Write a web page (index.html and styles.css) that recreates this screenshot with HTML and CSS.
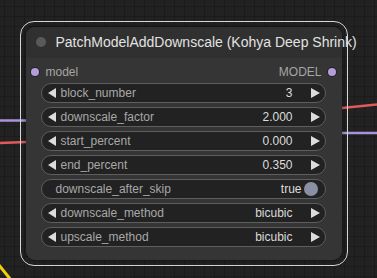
FILE: index.html
```html
<!DOCTYPE html>
<html>
<head>
<meta charset="utf-8">
<link rel="stylesheet" href="styles.css">
</head>
<body>
<div class="canvas">
  <svg class="links" width="377" height="278" viewBox="0 0 377 278">
    <line x1="0" y1="120.5" x2="26" y2="120.5" stroke="#a994dc" stroke-width="2.5"/>
    <line x1="0" y1="143" x2="26" y2="142" stroke="#e05a5a" stroke-width="2.5"/>
    <line x1="342" y1="108" x2="377" y2="104.5" stroke="#e05a5a" stroke-width="2.5"/>
    <line x1="342" y1="133" x2="377" y2="133" stroke="#a994dc" stroke-width="2.5"/>
    <line x1="-2" y1="264" x2="11" y2="280" stroke="#f2cf0a" stroke-width="3"/>
  </svg>
  <div class="outline">
    <div class="node">
      <div class="title">
        <span class="tdot"></span>
        <span class="ttext">PatchModelAddDownscale (Kohya Deep Shrink)</span>
      </div>
      <div class="body">
        <div class="io">
          <span class="slot"><span class="sdot"></span>model</span>
          <span class="slot out">MODEL<span class="sdot"></span></span>
        </div>
        <div class="widgets">
          <div class="w"><span class="al"></span><span class="lab">block_number</span><span class="val">3</span><span class="ar"></span></div>
          <div class="w"><span class="al"></span><span class="lab">downscale_factor</span><span class="val">2.000</span><span class="ar"></span></div>
          <div class="w"><span class="al"></span><span class="lab">start_percent</span><span class="val">0.000</span><span class="ar"></span></div>
          <div class="w"><span class="al"></span><span class="lab">end_percent</span><span class="val">0.350</span><span class="ar"></span></div>
          <div class="w toggle"><span class="lab">downscale_after_skip</span><span class="val">true</span><span class="knob"></span></div>
          <div class="w"><span class="al"></span><span class="lab">downscale_method</span><span class="val">bicubic</span><span class="ar"></span></div>
          <div class="w"><span class="al"></span><span class="lab">upscale_method</span><span class="val">bicubic</span><span class="ar"></span></div>
        </div>
      </div>
    </div>
  </div>
</div>
</body>
</html>
```
FILE: styles.css
```css
* { box-sizing: border-box; }
html, body { margin: 0; padding: 0; }
body {
  width: 377px;
  height: 278px;
  overflow: hidden;
  font-family: "Liberation Sans", Arial, sans-serif;
  background-color: #222222;
  background-image:
    linear-gradient(#1b1b1b 1px, transparent 1px),
    linear-gradient(90deg, #1b1b1b 1px, transparent 1px);
  background-size: 10px 10px;
  background-position: 4px 6px;
}
.canvas {
  position: relative;
  width: 377px;
  height: 278px;
  padding: 21px 0 0 20px;
}
.links {
  position: absolute;
  left: 0;
  top: 0;
}
.outline {
  position: relative;
  width: 328px;
  height: 245px;
  border: 1.5px solid #d6d6d6;
  border-radius: 14px;
  padding: 4.5px;
}
.node {
  width: 316px;
  height: 233px;
  background: #353535;
  border-radius: 9px;
  box-shadow: 0 0 4px rgba(0,0,0,0.5);
}
.title {
  height: 31px;
  display: flex;
  align-items: center;
  background: #303030;
  border-radius: 9px 9px 0 0;
  padding-left: 10px;
  white-space: nowrap;
}
.tdot {
  width: 10px;
  height: 10px;
  border-radius: 50%;
  background: #595959;
  flex: none;
}
.ttext {
  margin-left: 10px;
  font-size: 14px;
  color: #e2e2e2;
}
.body {
  padding: 7px 0 0 0;
}
.io {
  height: 14px;
  display: flex;
  justify-content: space-between;
  align-items: center;
  padding: 0 6px 0 5px;
  font-size: 12px;
  color: #a6a6a6;
}
.slot {
  display: flex;
  align-items: center;
  gap: 7px;
}
.out { gap: 6px; }
.sdot {
  width: 8px;
  height: 8px;
  border-radius: 50%;
  background: #b39ddb;
  box-shadow: 0 0 0 1px #222;
}
.widgets {
  display: flex;
  flex-direction: column;
  gap: 4px;
  padding: 4px 16px 0 15px;
}
.w {
  height: 20px;
  border: 1px solid #5e5e5e;
  border-radius: 10px;
  background: #222222;
  display: flex;
  align-items: center;
  padding: 0 5px 0 5px;
  font-size: 12px;
}
.lab {
  color: #a8a8a8;
  flex: 1;
  margin-left: 5px;
}
.val {
  color: #dcdcdc;
  margin-right: 18px;
}
.al {
  width: 0;
  height: 0;
  border-top: 5px solid transparent;
  border-bottom: 5px solid transparent;
  border-right: 8px solid #dcdcdc;
  margin-left: 1px;
}
.ar {
  width: 0;
  height: 0;
  border-top: 5px solid transparent;
  border-bottom: 5px solid transparent;
  border-left: 9px solid #dcdcdc;
}
.toggle { padding-left: 9px; padding-right: 7px; }
.toggle .lab { margin-left: 5px; }
.toggle .val { margin-right: 2px; }
.knob {
  width: 14px;
  height: 14px;
  border-radius: 50%;
  background: #8b8fa3;
}
```
